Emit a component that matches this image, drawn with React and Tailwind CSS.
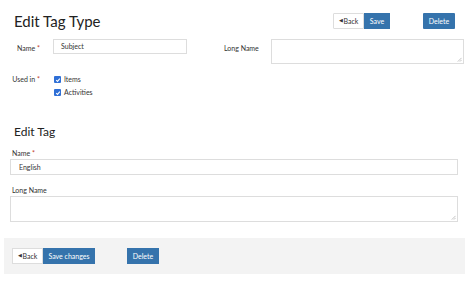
import React from 'react';

function Req() {
  return <span className="text-[#c0392b]"> *</span>;
}

function Check({ label }) {
  return (
    <label className="flex items-center gap-[3px] h-[13px]">
      <span className="w-[7px] h-[7px] rounded-[1px] bg-[#2f6fd6] flex items-center justify-center">
        <svg viewBox="0 0 10 10" className="w-[6px] h-[6px]">
          <path d="M2 5.2 L4.2 7.3 L8 2.8" stroke="white" strokeWidth="1.8" fill="none" />
        </svg>
      </span>
      <span>{label}</span>
    </label>
  );
}

function Grip() {
  return (
    <svg viewBox="0 0 6 6" className="absolute right-[1px] bottom-[1px] w-[5px] h-[5px]">
      <path d="M5.5 1 L1 5.5 M5.5 3.5 L3.5 5.5" stroke="#999" strokeWidth="0.7" />
    </svg>
  );
}

export default function App() {
  return (
    <div className="w-[474px] h-[292px] bg-white text-[#333] text-[7px] overflow-hidden" style={{ fontFamily: 'Lato, "Open Sans", sans-serif' }}>
      {/* Edit Tag Type */}
      <div className="flex items-center h-[40px] pl-[14px] pr-[19px] pt-[2px]">
        <h1 className="text-[15px] text-[#222] leading-none">Edit Tag Type</h1>
        <div className="flex ml-auto">
          <button className="w-[31px] h-[16px] border border-[#ddd] bg-white rounded-l-[1px] flex items-center justify-center">
            <span className="text-[5px] mr-[1px]">◀</span>Back
          </button>
          <button className="w-[26px] h-[16px] bg-[#3573ac] text-white">Save</button>
        </div>
        <button className="ml-[33px] w-[32px] h-[16px] bg-[#3573ac] text-white rounded-[1px]">Delete</button>
      </div>

      <div className="flex pr-[10px] -mt-[1px]">
        <div className="flex items-start">
          <div className="w-[40px] text-right pt-[4px]">Name<Req /></div>
          <div className="ml-[13px] w-[134px] h-[15px] border border-[#ddd] flex items-center px-[7px]">Subject</div>
        </div>
        <div className="ml-[37px] pt-[4px] w-[47px]">Long Name</div>
        <div className="relative w-[193px] h-[25px] border border-[#ddd]"><Grip /></div>
      </div>

      <div className="flex mt-[9px]">
        <div className="w-[40px] text-right pt-[1px]">Used in<Req /></div>
        <div className="ml-[14px] flex flex-col">
          <Check label="Items" />
          <Check label="Activities" />
        </div>
      </div>

      {/* Edit Tag */}
      <div className="pl-[14px] mt-[27px] text-[12px] text-[#222] leading-none">Edit Tag</div>
      <div className="px-[10px] mt-[12px] w-[468px]">
        <div className="pl-[2px] leading-none">Name<Req /></div>
        <div className="mt-[2px] h-[16px] border border-[#ddd] flex items-center px-[8px]">English</div>
        <div className="pl-[2px] mt-[12px] leading-none">Long Name</div>
        <div className="relative mt-[2px] h-[26px] border border-[#ddd]"><Grip /></div>
      </div>

      {/* Footer */}
      <div className="mt-[16px] ml-[4px] w-[461px] h-[36px] bg-[#f3f3f3] flex items-center pl-[8px]">
        <div className="flex">
          <button className="w-[31px] h-[16px] border border-[#ddd] bg-white flex items-center justify-center">
            <span className="text-[5px] mr-[1px]">◀</span>Back
          </button>
          <button className="w-[52px] h-[16px] bg-[#3573ac] text-white">Save changes</button>
        </div>
        <button className="ml-[32px] w-[32px] h-[16px] bg-[#3573ac] text-white">Delete</button>
      </div>
    </div>
  );
}
